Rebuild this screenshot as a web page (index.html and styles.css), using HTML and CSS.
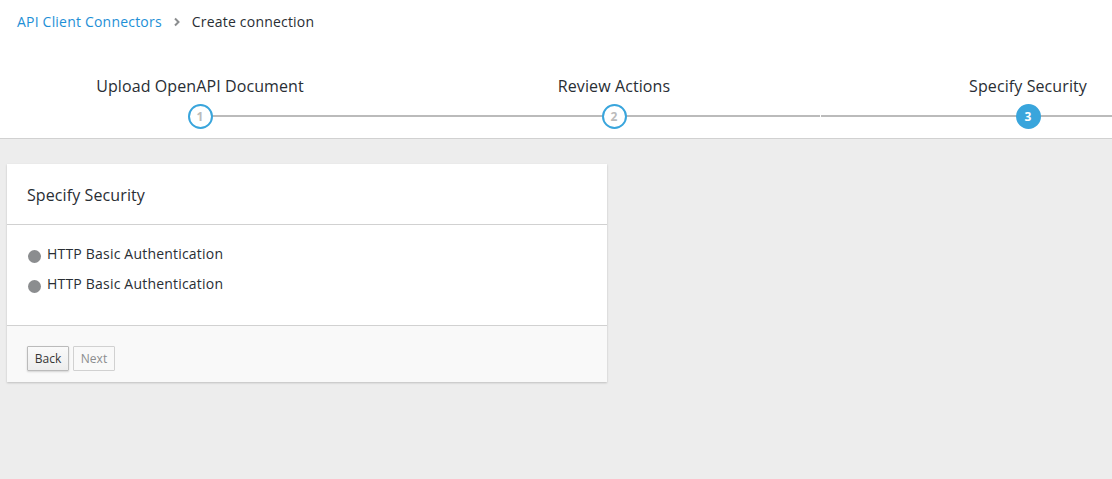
FILE: index.html
```html
<!DOCTYPE html>
<html>
<head>
<meta charset="utf-8">
<link rel="stylesheet" href="styles.css">
</head>
<body>
<div class="top">
  <nav class="breadcrumb">
    <a class="crumb-link">API Client Connectors</a>
    <span class="crumb-sep"><svg width="8" height="10" viewBox="0 0 8 10"><path d="M2 1.5 L5.5 5 L2 8.5" fill="none" stroke="#8b8d8f" stroke-width="2"/></svg></span>
    <span class="crumb-current">Create connection</span>
  </nav>
  <div class="steps">
    <div class="step step-first">
      <div class="step-label">Upload OpenAPI Document</div>
      <div class="step-track"><span class="step-circle">1</span></div>
    </div>
    <div class="step">
      <div class="step-label">Review Actions</div>
      <div class="step-track"><span class="step-circle">2</span></div>
    </div>
    <div class="step">
      <div class="step-label">Specify Security</div>
      <div class="step-track"><span class="step-circle active">3</span></div>
    </div>
  </div>
</div>
<div class="content">
  <div class="card">
    <div class="card-header">Specify Security</div>
    <div class="card-body">
      <label class="radio"><span class="dot"></span>HTTP Basic Authentication</label>
      <label class="radio"><span class="dot"></span>HTTP Basic Authentication</label>
    </div>
    <div class="card-footer">
      <button class="btn">Back</button>
      <button class="btn disabled">Next</button>
    </div>
  </div>
</div>
</body>
</html>
```

FILE: styles.css
```css
html, body {
  margin: 0;
  padding: 0;
}
body {
  background: #ededed;
  font-family: "Open Sans", "Liberation Sans", sans-serif;
  color: #292e34;
  overflow: hidden;
  width: 1112px;
  height: 479px;
}
.top {
  background: #fff;
  border-bottom: 1px solid #d1d1d1;
  height: 138px;
  overflow: hidden;
}
.breadcrumb {
  display: flex;
  align-items: center;
  padding: 12px 17px 10px;
  height: 20px;
  font-size: 14px;
  line-height: 20px;
  letter-spacing: 0.2px;
}
.crumb-link {
  color: #1e8fd6;
}
.crumb-sep {
  display: flex;
  align-items: center;
  margin: 0 11px 0 11px;
}
.crumb-current {
  color: #292e34;
}
.steps {
  display: flex;
  margin-left: -7px;
  width: 1260px;
}
.step {
  width: 414px;
  flex: none;
  display: flex;
  flex-direction: column;
  align-items: center;
}
.step-label {
  margin-top: 34px;
  font-size: 16px;
  line-height: 20px;
  letter-spacing: 0.1px;
  color: #292e34;
}
.step-track {
  position: relative;
  width: 100%;
  height: 24px;
  margin-top: 8px;
  display: flex;
  justify-content: center;
}
.step-track::before {
  content: "";
  position: absolute;
  left: 0;
  right: 1px;
  top: 11px;
  height: 2px;
  background: #bbb;
}
.step-first .step-track::before {
  left: 50%;
  right: 0;
}
.step-circle {
  position: relative;
  box-sizing: border-box;
  width: 25px;
  height: 25px;
  border-radius: 50%;
  border: 2px solid #39a5dc;
  background: #fff;
  color: #bbb;
  font-size: 12px;
  font-weight: 700;
  display: flex;
  align-items: center;
  justify-content: center;
  line-height: 1;
}
.step-circle.active {
  background: #39a5dc;
  color: #fff;
}
.content {
  padding: 25px 0 0 7px;
}
.card {
  width: 600px;
  background: #fff;
  box-shadow: 0 1px 2px rgba(3, 3, 3, 0.2);
}
.card-header {
  padding: 21px 20px 19px;
  font-size: 16px;
  line-height: 20px;
  letter-spacing: 0.1px;
  border-bottom: 1px solid #d1d1d1;
}
.card-body {
  padding: 19px 20px 31px;
  display: flex;
  flex-direction: column;
  gap: 10px;
}
.radio {
  display: flex;
  align-items: center;
  font-size: 14px;
  line-height: 20px;
  height: 20px;
  letter-spacing: 0.2px;
}
.dot {
  width: 13px;
  height: 13px;
  border-radius: 50%;
  background: #8b8d8f;
  margin: 5px 6px 0 1px;
}
.card-footer {
  background: #f9f9f9;
  border-top: 1px solid #d1d1d1;
  padding: 20px 20px 11px;
  display: flex;
  gap: 4px;
}
.btn {
  box-sizing: border-box;
  height: 25px;
  width: 42px;
  padding: 0;
  font-family: "Open Sans", "Liberation Sans", sans-serif;
  font-size: 12px;
  font-weight: 400;
  color: #363636;
  border: 1px solid #bbb;
  border-radius: 1px;
  background: linear-gradient(#fafafa, #ededed);
  box-shadow: 0 1px 2px rgba(3, 3, 3, 0.15);
}
.btn.disabled {
  color: #8b8d8f;
  background: #f9f9f9;
  border-color: #d1d1d1;
  box-shadow: none;
}
```
